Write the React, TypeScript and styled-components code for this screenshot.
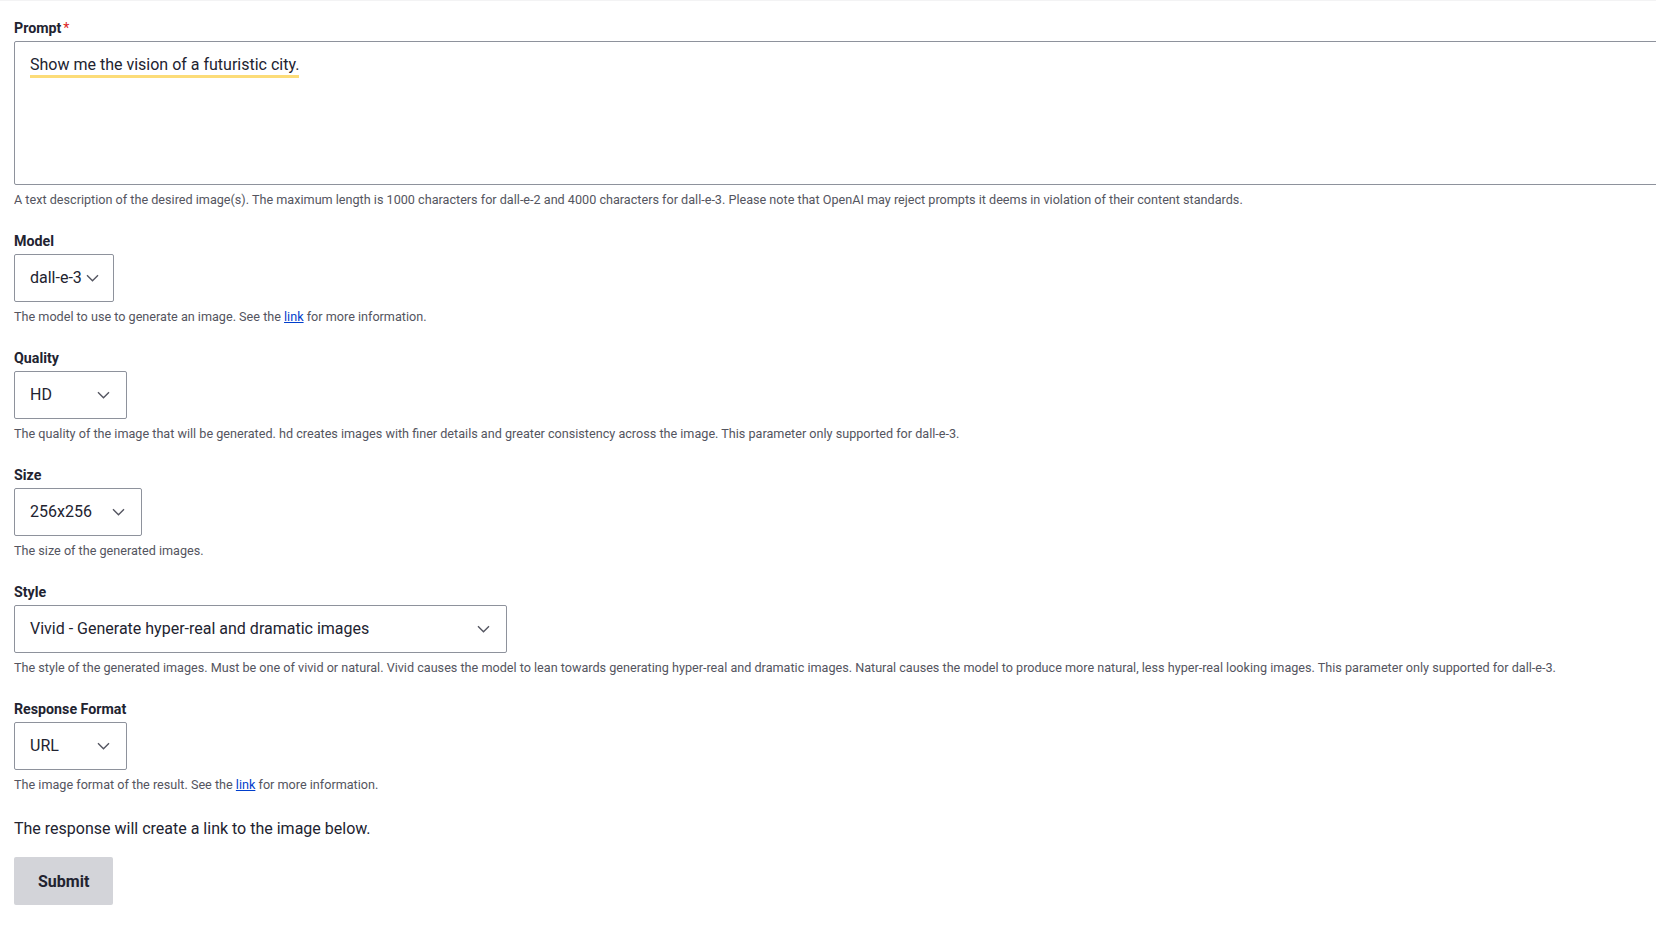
import styled, { createGlobalStyle } from 'styled-components';

const GlobalStyle = createGlobalStyle`
  html, body {
    margin: 0;
    padding: 0;
    background: #fff;
    overflow: hidden;
  }
  body {
    font-family: Roboto, "Liberation Sans", Arial, sans-serif;
    color: #222330;
  }
`;

const Page = styled.div`
  border-top: 1px solid #f3f3f4;
  padding: 18px 0 0 14px;
  overflow: hidden;
`;

const FormItem = styled.div`
  margin-bottom: 24px;
  &:last-of-type {
    margin-bottom: 0;
  }
`;

const Label = styled.div`
  font-size: 14.22px;
  line-height: 18px;
  font-weight: 700;
  margin-bottom: 4px;
  color: #222330;
`;

const Required = styled.span`
  color: #dc2323;
  font-weight: 400;
  margin-left: 2px;
`;

const TextArea = styled.div`
  box-sizing: border-box;
  width: 1700px;
  height: 144px;
  border: 1px solid #8e929c;
  border-radius: 2px;
  padding: 11px 15px;
  font-size: 16px;
  line-height: 24px;
  color: #222330;
  background: #fff;
`;

const Marked = styled.span`
  border-bottom: 3px solid #fcdc78;
  padding-bottom: 1px;
`;

const Select = styled.div<{ $width: number }>`
  box-sizing: border-box;
  width: ${(p) => p.$width}px;
  height: 48px;
  border: 1px solid #8e929c;
  border-radius: 2px;
  padding: 0 16px 1px 15px;
  display: flex;
  align-items: center;
  justify-content: space-between;
  gap: 4px;
  font-size: 16px;
  color: #222330;
  background: #fff;
  white-space: nowrap;
`;

const Chevron = styled.svg`
  flex: none;
  width: 13px;
  height: 8px;
`;

const Description = styled.div`
  margin-top: 6px;
  font-size: 12.64px;
  line-height: 17px;
  color: #545560;
  white-space: nowrap;
`;

const Link = styled.a`
  color: #003ecc;
  text-decoration: underline;
`;

const Note = styled.p`
  margin: 24px 0 16px;
  font-size: 16px;
  line-height: 24px;
  color: #222330;
`;

const Button = styled.button`
  box-sizing: border-box;
  width: 99px;
  height: 48px;
  border: 0;
  border-radius: 2px;
  background: #d3d4d9;
  color: #222330;
  font-family: Roboto, "Liberation Sans", Arial, sans-serif;
  font-size: 16px;
  font-weight: 700;
  padding: 0 24px;
`;

const ChevronIcon = () => (
  <Chevron viewBox="0 0 13 8" fill="none">
    <path d="M1 1.2l5.5 5.5 5.5-5.5" stroke="#545560" strokeWidth="1.4" />
  </Chevron>
);

type SelectFieldProps = {
  label: string;
  value: string;
  width: number;
  children: React.ReactNode;
};

const SelectField = ({ label, value, width, children }: SelectFieldProps) => (
  <FormItem>
    <Label>{label}</Label>
    <Select $width={width}>
      <span>{value}</span>
      <ChevronIcon />
    </Select>
    <Description>{children}</Description>
  </FormItem>
);

export default function App() {
  return (
    <Page>
      <GlobalStyle />
      <FormItem>
        <Label>
          Prompt<Required>*</Required>
        </Label>
        <TextArea role="textbox">
          <Marked>Show me the vision of a futuristic city.</Marked>
        </TextArea>
        <Description>
          A text description of the desired image(s). The maximum length is 1000 characters for dall-e-2 and 4000
          characters for dall-e-3. Please note that OpenAI may reject prompts it deems in violation of their content
          standards.
        </Description>
      </FormItem>

      <SelectField label="Model" value="dall-e-3" width={100}>
        The model to use to generate an image. See the <Link href="#">link</Link> for more information.
      </SelectField>

      <SelectField label="Quality" value="HD" width={113}>
        The quality of the image that will be generated. hd creates images with finer details and greater consistency
        across the image. This parameter only supported for dall-e-3.
      </SelectField>

      <SelectField label="Size" value="256x256" width={128}>
        The size of the generated images.
      </SelectField>

      <SelectField label="Style" value="Vivid - Generate hyper-real and dramatic images" width={493}>
        The style of the generated images. Must be one of vivid or natural. Vivid causes the model to lean towards
        generating hyper-real and dramatic images. Natural causes the model to produce more natural, less hyper-real
        looking images. This parameter only supported for dall-e-3.
      </SelectField>

      <SelectField label="Response Format" value="URL" width={113}>
        The image format of the result. See the <Link href="#">link</Link> for more information.
      </SelectField>

      <Note>The response will create a link to the image below.</Note>
      <Button>Submit</Button>
    </Page>
  );
}
